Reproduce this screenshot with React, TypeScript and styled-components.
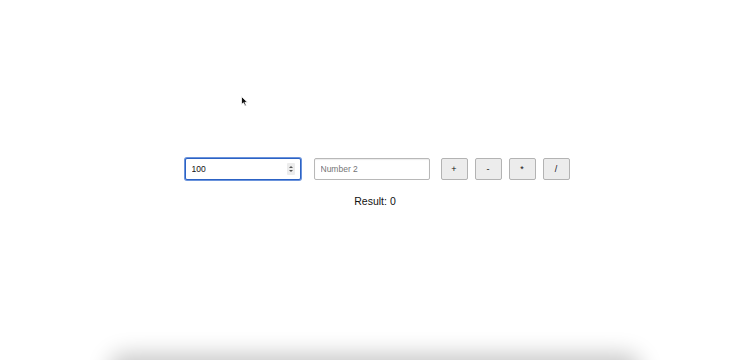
import React, { useState } from 'react'
import styled, { createGlobalStyle, css } from 'styled-components'

const GlobalStyle = createGlobalStyle`
  html, body {
    margin: 0;
    padding: 0;
    background: #ffffff;
    font-family: "Liberation Sans", Arial, sans-serif;
  }
`

const Page = styled.div`
  position: relative;
  height: 360px;
  overflow: hidden;
  display: flex;
  flex-direction: column;
  align-items: center;
  padding-top: 158px;
  box-sizing: border-box;
`

const Controls = styled.div`
  display: flex;
  align-items: center;
  gap: 7px;
  margin-left: 4px;
`

const Field = styled.div<{ space: number }>`
  position: relative;
  margin-right: ${({ space }) => space}px;
`

// 入力欄
const Input = styled.input<{ focused?: boolean }>`
  width: 116px;
  height: 22px;
  box-sizing: border-box;
  padding: 0 18px 0 6px;
  font-family: "Liberation Sans", Arial, sans-serif;
  font-size: 8.5px;
  color: #111;
  background: #fff;
  border-radius: 2px;
  outline: none;
  border: 1px solid #b8b8b8;
  box-shadow: inset 0 1px 1px rgba(0, 0, 0, 0.08);
  ${({ focused }) =>
    focused &&
    css`
      border: 1px solid #2c62c4;
      box-shadow: 0 0 0 1px #6a93dc;
    `}
  &::placeholder {
    color: #757575;
  }
`

const Spinner = styled.div`
  position: absolute;
  right: 6px;
  top: 5px;
  width: 8px;
  height: 12px;
  background: #ececec;
  border-radius: 1px;
  display: flex;
  align-items: center;
  justify-content: center;
`

const OpButton = styled.button`
  width: 27px;
  height: 22px;
  padding: 0;
  box-sizing: border-box;
  font-family: "Liberation Sans", Arial, sans-serif;
  font-size: 9px;
  color: #111;
  background: #ececec;
  border: 1px solid #b3b3b3;
  border-radius: 2px;
`

const Result = styled.div`
  margin-top: 15px;
  font-size: 10.5px;
  color: #111;
`

const Cursor = styled.svg`
  position: absolute;
  left: 241px;
  top: 96px;
`

const WindowShadow = styled.div`
  position: absolute;
  left: 115px;
  right: 115px;
  top: 362px;
  height: 40px;
  border-radius: 10px;
  box-shadow: 0 -2px 22px 6px rgba(0, 0, 0, 0.22);
`

export default function App() {
  const [a, setA] = useState('100')
  const [b, setB] = useState('')
  const [result, setResult] = useState<number>(0)

  const run = (op: string) => {
    const x = Number(a) || 0
    const y = Number(b) || 0
    if (op === '+') setResult(x + y)
    if (op === '-') setResult(x - y)
    if (op === '*') setResult(x * y)
    if (op === '/') setResult(y === 0 ? 0 : x / y)
  }

  return (
    <>
      <GlobalStyle />
      <Page>
        <Controls>
          <Field space={6}>
            <Input focused value={a} onChange={(e) => setA(e.target.value)} />
            <Spinner>
              <svg width="4" height="8" viewBox="0 0 4 8">
                <path d="M0 3 L2 1 L4 3 Z M0 5 L2 7 L4 5 Z" fill="#555" />
              </svg>
            </Spinner>
          </Field>
          <Field space={4}>
            <Input placeholder="Number 2" value={b} onChange={(e) => setB(e.target.value)} />
          </Field>
          {['+', '-', '*', '/'].map((op) => (
            <OpButton key={op} onClick={() => run(op)}>
              {op}
            </OpButton>
          ))}
        </Controls>
        <Result>Result: {result}</Result>
        <Cursor width="8" height="11" viewBox="0 0 8 11">
          <path d="M0.5 0.5 L0.5 8.5 L2.5 6.8 L4 10 L5.3 9.4 L3.9 6.3 L6.5 6.3 Z" fill="#111" stroke="#fff" strokeWidth="0.8" />
        </Cursor>
        <WindowShadow />
      </Page>
    </>
  )
}
